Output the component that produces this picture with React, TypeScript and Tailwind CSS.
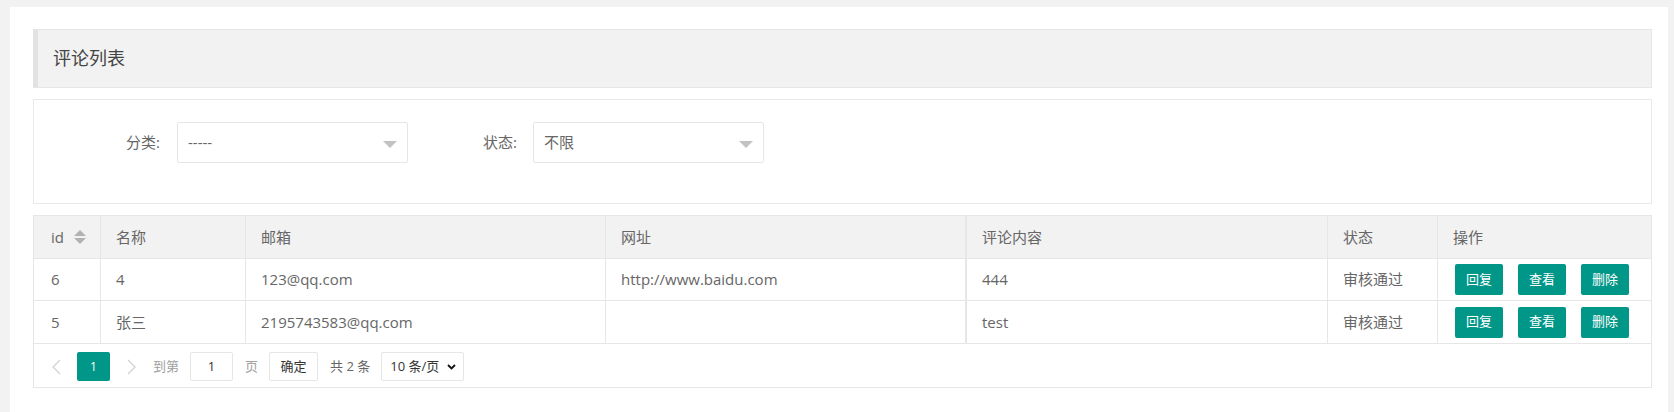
import React from "react"

const font = { fontFamily: '"Open Sans", "Noto Sans CJK SC", sans-serif' }

type Row = {
  id: string
  name: string
  email: string
  url: string
  content: string
  status: string
}

const rows: Row[] = [
  { id: "6", name: "4", email: "123@qq.com", url: "http://www.baidu.com", content: "444", status: "审核通过" },
  { id: "5", name: "张三", email: "2195743583@qq.com", url: "", content: "test", status: "审核通过" },
]

const cols = "grid grid-cols-[66px_145px_360px_360px_362px_110px_1fr]"

function SelectBox({ value, className = "" }: { value: string; className?: string }) {
  return (
    <div
      className={`relative flex h-[41px] w-[231px] items-center rounded-[2px] border border-[#e6e6e6] bg-white pl-[10px] text-[15px] text-[#666] ${className}`}
    >
      <span>{value}</span>
      {/* layui style caret */}
      <span className="absolute right-[10px] top-[18px] h-0 w-0 border-x-[7px] border-t-[7px] border-x-transparent border-t-[#c2c2c2]" />
    </div>
  )
}

function SortIcon() {
  return (
    <svg width="12" height="14" viewBox="0 0 12 14" className="ml-[10px]">
      <polygon points="6,0 12,6 0,6" fill="#b2b2b2" />
      <polygon points="0,8 12,8 6,14" fill="#b2b2b2" />
    </svg>
  )
}

function ActionButton({ label }: { label: string }) {
  return (
    <button className="flex h-[31px] w-[48px] items-center justify-center rounded-[2px] bg-[#009688] text-[13px] text-white">
      {label}
    </button>
  )
}

export default function App() {
  return (
    <div className="h-[412px] overflow-hidden bg-[#f2f2f2] pl-[10px] pr-[6px] pt-[7px]" style={font}>
      <div className="h-full bg-white pl-[23px] pr-[16px] pt-[22px]">
        {/* title bar */}
        <div className="flex h-[59px] items-center border border-l-[5px] border-[#e6e6e6] border-l-[#e2e2e2] bg-[#f2f2f2] pl-[15px] text-[18px] text-[#444]">
          评论列表
        </div>

        {/* filters */}
        <div className="mt-[11px] flex h-[105px] items-start border border-[#e9e9e9] pl-[31px] pt-[22px]">
          <label className="flex h-[41px] w-[110px] items-center justify-end pr-[15px] text-[15px] text-[#666]">
            分类:
          </label>
          <SelectBox value="-----" className="ml-[2px]" />
          <label className="ml-[14px] flex h-[41px] w-[110px] items-center justify-end pr-[15px] text-[15px] text-[#666]">
            状态:
          </label>
          <SelectBox value="不限" className="ml-[1px]" />
        </div>

        {/* table */}
        <div className="mt-[11px] border border-[#e6e6e6] text-[15px] text-[#666]">
          <div className={`${cols} h-[43px] border-b border-[#e6e6e6] bg-[#f2f2f2]`}>
            <div className="flex items-center pl-[17px]">
              id
              <SortIcon />
            </div>
            <div className="flex items-center border-l border-[#e6e6e6] pl-[15px]">名称</div>
            <div className="flex items-center border-l border-[#e6e6e6] pl-[15px]">邮箱</div>
            <div className="flex items-center border-l border-[#e6e6e6] pl-[15px]">网址</div>
            <div className="flex items-center border-l-2 border-[#e6e6e6] pl-[15px]">评论内容</div>
            <div className="flex items-center border-l border-[#e6e6e6] pl-[15px]">状态</div>
            <div className="flex items-center border-l border-[#e6e6e6] pl-[15px]">操作</div>
          </div>

          {rows.map((r, i) => (
            <div key={r.id} className={`${cols} ${i === 0 ? "h-[42px]" : "h-[43px]"} border-b border-[#e6e6e6]`}>
              <div className="flex items-center pl-[17px]">{r.id}</div>
              <div className="flex items-center border-l border-[#e6e6e6] pl-[15px]">{r.name}</div>
              <div className="flex items-center border-l border-[#e6e6e6] pl-[15px]">{r.email}</div>
              <div className="flex items-center border-l border-[#e6e6e6] pl-[15px]">{r.url}</div>
              <div className="flex items-center border-l-2 border-[#e6e6e6] pl-[15px]">{r.content}</div>
              <div className="flex items-center border-l border-[#e6e6e6] pl-[15px]">{r.status}</div>
              <div className="flex items-center gap-[15px] border-l border-[#e6e6e6] pl-[17px]">
                <ActionButton label="回复" />
                <ActionButton label="查看" />
                <ActionButton label="删除" />
              </div>
            </div>
          ))}

          {/* pagination */}
          <div className="flex h-[43px] items-start pl-[18px] pt-[8px] text-[13px]">
            <div className="flex h-[29px] items-center">
              <svg width="9" height="16" viewBox="0 0 9 16">
                <path d="M8 1L1 8l7 7" fill="none" stroke="#d2d2d2" strokeWidth="1.3" />
              </svg>
            </div>
            <div className="ml-[16px] flex h-[29px] w-[33px] items-center justify-center rounded-[2px] bg-[#009688] text-[12px] text-white">
              1
            </div>
            <div className="ml-[17px] flex h-[29px] items-center">
              <svg width="9" height="16" viewBox="0 0 9 16">
                <path d="M1 1l7 7-7 7" fill="none" stroke="#d2d2d2" strokeWidth="1.3" />
              </svg>
            </div>
            <span className="ml-[17px] flex h-[29px] items-center text-[#a0a0a0]">到第</span>
            <div className="ml-[11px] flex h-[29px] w-[43px] items-center justify-center rounded-[2px] border border-[#e6e6e6] text-[#333]">
              1
            </div>
            <span className="ml-[12px] flex h-[29px] items-center text-[#a0a0a0]">页</span>
            <button className="ml-[11px] flex h-[29px] w-[49px] items-center justify-center rounded-[2px] border border-[#e6e6e6] text-[#333]">
              确定
            </button>
            <span className="ml-[12px] flex h-[29px] items-center text-[#666]">共 2 条</span>
            <div className="ml-[11px] flex h-[29px] w-[83px] items-center rounded-[2px] border border-[#e6e6e6] pl-[8px] text-[#333]">
              <span>10 条/页</span>
              <svg width="9" height="6" viewBox="0 0 9 6" className="ml-[8px]">
                <path d="M1 1l3.5 3.5L8 1" fill="none" stroke="#111" strokeWidth="1.8" />
              </svg>
            </div>
          </div>
        </div>
      </div>
    </div>
  )
}
